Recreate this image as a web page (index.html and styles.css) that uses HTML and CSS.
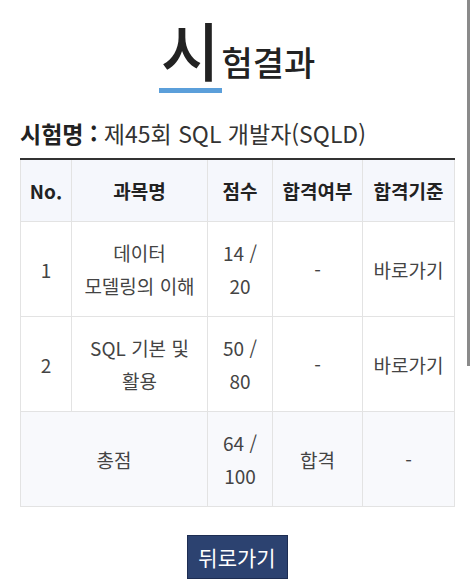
FILE: index.html
```html
<!DOCTYPE html>
<html lang="ko">
<head>
<meta charset="utf-8">
<link rel="stylesheet" href="styles.css">
</head>
<body>
<div class="page">
  <h1 class="title"><span class="title-big">시</span><span class="title-rest">험결과</span></h1>
  <p class="exam-name"><strong>시험명 :</strong> 제45회 SQL 개발자(SQLD)</p>
  <table class="result">
    <colgroup>
      <col class="c-no"><col class="c-subj"><col class="c-score"><col class="c-pass"><col class="c-std">
    </colgroup>
    <thead>
      <tr><th>No.</th><th>과목명</th><th>점수</th><th>합격여부</th><th>합격기준</th></tr>
    </thead>
    <tbody>
      <tr><td>1</td><td>데이터 모델링의 이해</td><td>14 / 20</td><td>-</td><td>바로가기</td></tr>
      <tr><td>2</td><td>SQL 기본 및 활용</td><td>50 / 80</td><td>-</td><td>바로가기</td></tr>
      <tr class="total"><td colspan="2">총점</td><td>64 / 100</td><td>합격</td><td>-</td></tr>
    </tbody>
  </table>
  <div class="actions"><button class="back">뒤로가기</button></div>
</div>
<div class="scrollbar"></div>
</body>
</html>
```
FILE: styles.css
```css
html, body {
  margin: 0;
  padding: 0;
  background: #fff;
}
body {
  font-family: "Noto Sans CJK KR", "Noto Sans", sans-serif;
  color: #333;
}
.page {
  padding: 0 20px;
}
.title {
  margin: 0;
  padding-top: 8px;
  text-align: center;
  font-weight: 500;
  color: #222;
  line-height: 1;
}
.title-big {
  display: inline-block;
  font-size: 64px;
  line-height: 80px;
  padding: 0 2px;
  border-bottom: 5px solid #5b9fda;
}
.title-rest {
  font-size: 34px;
}
.exam-name {
  margin: 23px 0 0;
  font-size: 23px;
  line-height: 34px;
  color: #333;
}
.exam-name strong {
  font-weight: 700;
  color: #222;
}
.result {
  margin-top: 8px;
  width: 100%;
  border-collapse: collapse;
  table-layout: fixed;
  border-top: 2px solid #333;
  font-size: 19px;
  line-height: 33px;
}
.c-no { width: 51px; }
.c-subj { width: 136px; }
.c-score { width: 65px; }
.c-pass { width: 90px; }
.c-std { width: 92px; }
.result th, .result td {
  border: 1px solid #e3e3e3;
  padding: 14px 3px;
  text-align: center;
  word-break: keep-all;
}
.result td {
  padding: 14px 10px;
  color: #444;
}
.result thead th {
  border-top: none;
  background: #f5f7fc;
  color: #222;
  font-weight: 700;
}
.result tr.total td {
  background: #f8f9fc;
}
.actions {
  margin-top: 28px;
  text-align: center;
}
.back {
  width: 101px;
  height: 44px;
  background: #2c4270;
  border: 1px solid #1d2d52;
  color: #fff;
  font-family: "Noto Sans CJK KR", sans-serif;
  font-size: 21px;
  padding: 0;
}
.scrollbar {
  position: absolute;
  top: 0;
  left: 467px;
  width: 3px;
  height: 366px;
  background: #8a8a8a;
}
```
